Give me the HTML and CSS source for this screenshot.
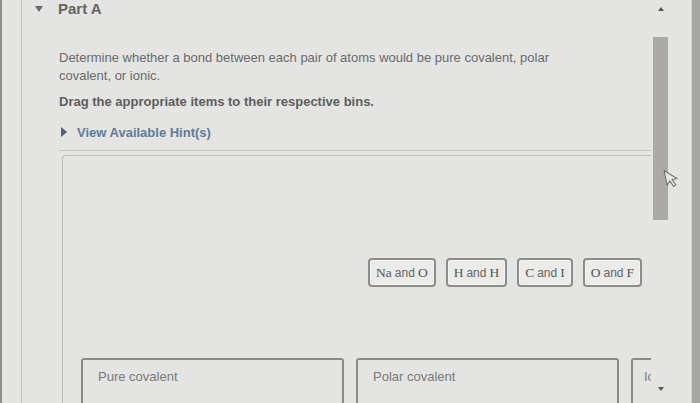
FILE: index.html
```html
<!DOCTYPE html>
<html>
<head>
<meta charset="utf-8">
<link rel="stylesheet" href="styles.css">
</head>
<body>
<div class="screen">
  <div class="edge-left"></div>
  <div class="main">
    <div class="rail">
      <div class="part-head">
        <span class="caret-down"></span>
        <span class="part-title">Part A</span>
      </div>
      <div class="content">
        <p class="question">Determine whether a bond between each pair of atoms would be pure covalent, polar covalent, or ionic.</p>
        <p class="instruction">Drag the appropriate items to their respective bins.</p>
        <div class="hint"><span class="caret-right"></span><span class="hint-text">View Available Hint(s)</span></div>
        <div class="rule"></div>
        <div class="dropzone">
          <div class="items">
            <div class="item"><span class="sym">Na</span> and <span class="sym">O</span></div>
            <div class="item"><span class="sym">H</span> and <span class="sym">H</span></div>
            <div class="item"><span class="sym">C</span> and <span class="sym">I</span></div>
            <div class="item"><span class="sym">O</span> and <span class="sym">F</span></div>
          </div>
          <div class="bins">
            <div class="bin bin-pure"><span class="bin-label">Pure covalent</span></div>
            <div class="bin bin-polar"><span class="bin-label">Polar covalent</span></div>
            <div class="bin bin-ionic"><span class="bin-label">Ionic</span></div>
          </div>
        </div>
      </div>
    </div>
  </div>
  <div class="scrollbar">
    <span class="arrow-up"></span>
    <div class="thumb"></div>
    <span class="arrow-down"></span>
  </div>
  <div class="gutter"></div>
  <div class="edge-right"></div>
  <svg class="cursor" width="14" height="22" viewBox="0 0 14 22">
    <path d="M1 1 L1 16 L4.5 12.5 L7 18.5 L9.5 17.5 L7 11.5 L12 11.5 Z" fill="#e8e8e6" stroke="#6a6a6a" stroke-width="1"/>
  </svg>
</div>
</body>
</html>
```

FILE: styles.css
```css
html, body {
  margin: 0;
  padding: 0;
  background: #e4e4e2;
}
.screen {
  position: relative;
  width: 700px;
  height: 403px;
  overflow: hidden;
  display: flex;
  font-family: "Liberation Sans", Arial, sans-serif;
}
.edge-left {
  width: 2px;
  flex: 0 0 2px;
  background: #8e8e8c;
}
.main {
  flex: 0 0 649px;
  width: 649px;
  height: 403px;
  overflow: hidden;
  padding-left: 19px;
  box-sizing: border-box;
}
.rail {
  border-left: 1px solid #c4c4c2;
  height: 100%;
  box-sizing: border-box;
}
.part-head {
  display: flex;
  align-items: center;
  height: 17px;
  padding-left: 13px;
}
.caret-down {
  width: 0;
  height: 0;
  border-left: 4.5px solid transparent;
  border-right: 4.5px solid transparent;
  border-top: 6px solid #6a6a6a;
  margin-right: 15px;
}
.part-title {
  font-size: 15px;
  font-weight: 600;
  color: #646464;
}
.content {
  padding-left: 37px;
}
.question {
  margin: 32px 0 0 0;
  width: 505px;
  font-size: 13px;
  line-height: 18px;
  color: #6a6a6a;
}
.instruction {
  margin: 8px 0 0 0;
  font-size: 13px;
  line-height: 18px;
  font-weight: bold;
  color: #5e5e5e;
}
.hint {
  margin-top: 12px;
  display: flex;
  align-items: center;
  height: 18px;
}
.caret-right {
  width: 0;
  height: 0;
  border-top: 5px solid transparent;
  border-bottom: 5px solid transparent;
  border-left: 6px solid #4e6278;
  margin-left: 2px;
  margin-right: 10px;
}
.hint-text {
  font-size: 13px;
  font-weight: bold;
  color: #5e7c98;
}
.rule {
  margin-top: 9px;
  width: 600px;
  height: 1px;
  background: #c6c6c4;
}
.dropzone {
  margin-top: 4px;
  margin-left: 3px;
  width: 600px;
  height: 260px;
  border-top: 1px solid #bcbcba;
  border-left: 1px solid #bcbcba;
  border-top-left-radius: 4px;
  box-sizing: border-box;
}
.items {
  display: flex;
  justify-content: flex-end;
  gap: 10px;
  padding-top: 102px;
  padding-right: 20px;
}
.item {
  height: 29px;
  box-sizing: border-box;
  padding: 0 6px;
  display: flex;
  align-items: center;
  gap: 3px;
  border: 2px solid #8c8c8a;
  border-radius: 4px;
  background: #ebebe9;
  box-shadow: inset 0 0 0 1px #f4f4f2;
  font-size: 12px;
  color: #666;
}
.sym {
  font-family: "Liberation Serif", "Times New Roman", serif;
  font-size: 13.5px;
  color: #555;
}
.bins {
  display: flex;
  gap: 12px;
  margin-top: 71px;
  margin-left: 18px;
}
.bin {
  flex: 0 0 263px;
  height: 80px;
  box-sizing: border-box;
  border: 2px solid #8a8a88;
  border-radius: 3px;
  padding: 7px 15px;
}
.bin-ionic {
  padding-left: 11px;
}
.bin-label {
  font-size: 13px;
  color: #7a7a78;
}
.scrollbar {
  flex: 0 0 19px;
  position: relative;
  display: flex;
  flex-direction: column;
  align-items: center;
}
.arrow-up {
  margin-top: 7px;
  width: 0;
  height: 0;
  border-left: 3.5px solid transparent;
  border-right: 3.5px solid transparent;
  border-bottom: 4px solid #555;
}
.thumb {
  margin-top: 26px;
  width: 15px;
  height: 183px;
  background: #abaaa8;
  border-radius: 1px;
}
.arrow-down {
  margin-top: 167px;
  width: 0;
  height: 0;
  border-left: 3.5px solid transparent;
  border-right: 3.5px solid transparent;
  border-top: 4px solid #555;
}
.gutter {
  flex: 0 0 22px;
  border-right: 1px solid #d2d2d0;
  box-sizing: border-box;
}
.edge-right {
  flex: 1 1 auto;
  background: #a6a6a4;
}
.cursor {
  position: absolute;
  left: 665px;
  top: 168px;
  transform: rotate(-12deg);
}
```
